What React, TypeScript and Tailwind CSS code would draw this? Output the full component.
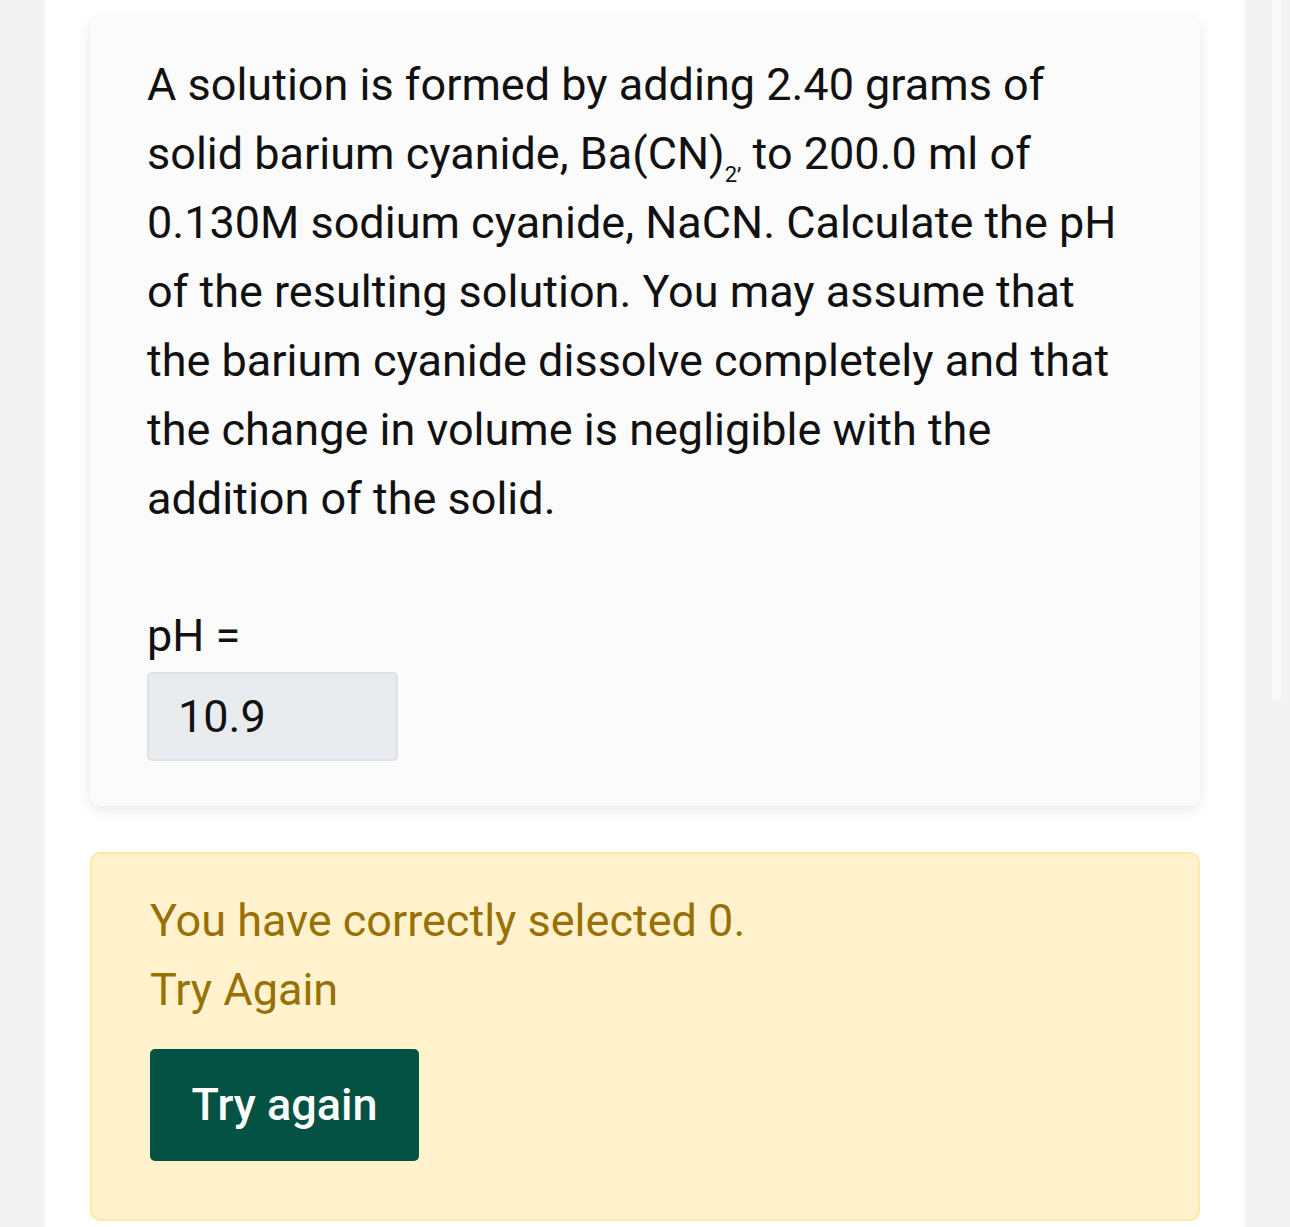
export default function App() {
  return (
    <div
      className="relative min-h-[1227px] bg-[#f3f3f3] px-[45px]"
      style={{ fontFamily: 'Roboto, "Noto Sans", sans-serif' }}
    >
      {/* scroll thumb on the right edge */}
      <div className="absolute right-[9px] top-0 h-[700px] w-[9px] rounded-b-full bg-[#f9f9f9]" />

      <div className="min-h-[1227px] bg-white px-[45px] pt-[17px]">
        <div className="rounded-[10px] bg-[#fbfbfb] px-[57px] pt-[33px] pb-[45px] shadow-[0_4px_14px_rgba(0,0,0,0.09)]">
          <p className="text-[45px] leading-[69px] text-[#111]">
            A solution is formed by adding 2.40 grams of solid barium cyanide, Ba(CN)
            <span className="relative top-[13px] text-[22px] leading-none">2</span>
            <span className="text-[22px] leading-none">,</span> to 200.0 ml of 0.130M sodium cyanide, NaCN.
            Calculate the pH of the resulting solution. You may assume that the barium cyanide dissolve
            completely and that the change in volume is negligible with the addition of the solid.
          </p>

          <p className="mt-[68px] text-[45px] leading-[69px] text-[#111]">pH =</p>
          <div className="mt-[2px] flex h-[89px] w-[251px] items-center rounded-[5px] border-2 border-[#dee2e6] bg-[#e9ecef] px-[29px] text-[45px] text-[#111]">
            10.9
          </div>
        </div>

        <div className="mt-[46px] rounded-[10px] border-2 border-[#ffe9a6] bg-[#fff2cd] px-[58px] pt-[32px] pb-[58px] text-[#987004]">
          <p className="text-[45px] leading-[69px]">You have correctly selected 0.</p>
          <p className="text-[45px] leading-[69px]">Try Again</p>
          <button
            type="button"
            className="mt-[25px] h-[112px] w-[269px] rounded-[5px] bg-[#045244] text-[45px] font-medium text-white"
          >
            Try again
          </button>
        </div>
      </div>
    </div>
  )
}
